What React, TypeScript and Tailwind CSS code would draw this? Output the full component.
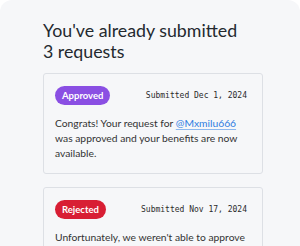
import React from 'react';

const requests = [
  {
    status: 'Approved',
    badge: 'bg-[#8a4fe3]',
    date: 'Submitted Dec 1, 2024',
    body: (
      <>
        Congrats! Your request for{' '}
        <a href="#" className="text-[#2f7de1] underline decoration-[#8db8ee] underline-offset-2">
          @Mxmilu666
        </a>{' '}
        was approved and your benefits are now available.
      </>
    ),
  },
  {
    status: 'Rejected',
    badge: 'bg-[#d81e34]',
    date: 'Submitted Nov 17, 2024',
    body: <>Unfortunately, we weren't able to approve your request at this time.</>,
  },
];

const App = () => {
  return (
    <div className="min-h-screen bg-white">
      <div className="h-[246px] overflow-hidden rounded-t-[12px] bg-[#f6f7f9] pl-[43px] pt-[20px] font-['Lato',sans-serif]">
        <h1 className="mb-[11px] w-[200px] text-[17.8px] leading-[21px] text-[#24292f]">
          You've already submitted 3 requests
        </h1>
        <div className="flex w-[220px] flex-col gap-[13px]">
          {requests.map((r) => (
            <div key={r.status} className="rounded-[3px] border border-[#dde0e5] bg-[#f6f7f9] pb-[12px] pl-[11px] pr-[14px] pt-[12px]">
              <div className="flex items-center justify-between">
                <span className={`${r.badge} rounded-full px-[7px] text-[9.5px] font-bold leading-[19px] text-white`}>
                  {r.status}
                </span>
                <span className="mr-[1px] font-['DejaVu_Sans_Mono',monospace] text-[8px] text-[#2b2b2b]">{r.date}</span>
              </div>
              <p className="mt-[11px] text-[10.3px] leading-[15px] text-[#333]">{r.body}</p>
            </div>
          ))}
        </div>
      </div>
    </div>
  );
};

export default App;
